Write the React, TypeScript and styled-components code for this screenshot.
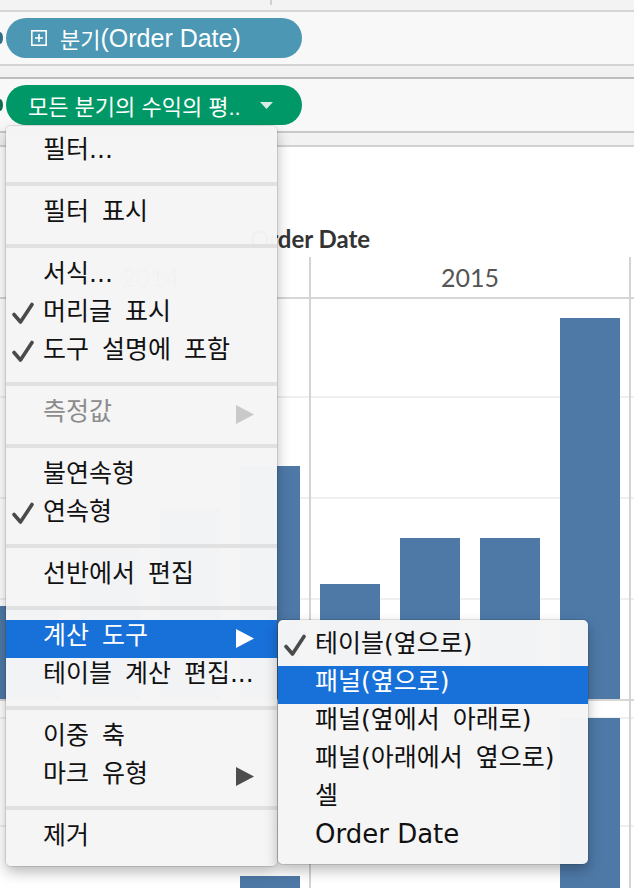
import styled, { createGlobalStyle } from "styled-components";

const GlobalStyle = createGlobalStyle`
  * { box-sizing: border-box; }
  html, body { margin: 0; padding: 0; background: #fff; }
  body { overflow: hidden; }
`;

// 화면 전체
const Page = styled.div`
  position: relative;
  width: 634px;
  height: 888px;
  overflow: hidden;
  display: flex;
  flex-direction: column;
  background: #fff;
  font-family: "Liberation Sans", "Noto Sans CJK KR", sans-serif;
`;

const TopStrip = styled.div`
  flex: none;
  height: 12px;
  background: #f3f3f3;
  border-bottom: 2px solid #d6d6d6;
  display: flex;
`;

const Tick = styled.span`
  margin-left: 270px;
  width: 2px;
  height: 5px;
  background: #d0d0d0;
`;

const Shelf = styled.div<{ $line: string }>`
  flex: none;
  height: 54px;
  background: #f8f8f8;
  border-bottom: 2px solid ${(p) => p.$line};
  display: flex;
  align-items: center;
  gap: 3px;
`;

const Spacer = styled.div<{ $h: number; $bg: string; $line: string }>`
  flex: none;
  height: ${(p) => p.$h}px;
  background: ${(p) => p.$bg};
  border-bottom: 2px solid ${(p) => p.$line};
`;

// 선반 왼쪽에 잘린 알약 끝
const Stub = styled.span<{ $color: string }>`
  flex: none;
  width: 6px;
  height: 12px;
  margin-left: -3px;
  border-radius: 50%;
  background: ${(p) => p.$color};
`;

const Pill = styled.div<{ $color: string; $pad: number }>`
  width: 296px;
  height: 40px;
  border-radius: 20px;
  background: ${(p) => p.$color};
  color: #fff;
  display: flex;
  align-items: center;
  padding-left: ${(p) => p.$pad}px;
  font-size: 22px;
  white-space: nowrap;
`;

const PillIcon = styled.svg`
  flex: none;
  margin-right: 13px;
`;

const Lat = styled.span<{ $size: number }>`
  font-size: ${(p) => p.$size}px;
  word-spacing: 0;
`;

const Caret = styled.svg`
  margin-left: auto;
  margin-right: 29px;
  flex: none;
`;

// 차트 영역
const Chart = styled.div`
  flex: 1;
  min-height: 0;
  display: flex;
  flex-direction: column;
  background: #fff;
`;

const ChartTitle = styled.div`
  margin: 76px 0 2px 250px;
  height: 32px;
  line-height: 32px;
  font-family: Lato, "Liberation Sans", sans-serif;
  font-weight: 700;
  font-size: 24px;
  color: #333;
`;

const Columns = styled.div`
  flex: 1;
  min-height: 0;
  display: grid;
  grid-template-columns: 320px 320px 40px;
  margin-left: -9px;
`;

const Column = styled.div`
  display: flex;
  flex-direction: column;
  border-right: 2px solid #d3d3d3;
  min-height: 0;
`;

const YearHeader = styled.div`
  flex: none;
  height: 42px;
  border-bottom: 2px solid #d6d6d6;
  display: flex;
  align-items: center;
  justify-content: center;
  font-family: Lato, "Liberation Sans", sans-serif;
  font-size: 25px;
  color: #555;
`;

const Pane = styled.div<{ $top?: boolean }>`
  display: flex;
  align-items: flex-end;
  gap: 20px;
  padding-left: 9px;
  overflow: hidden;
  ${(p) =>
    p.$top
      ? `
    flex: none;
    height: 402px;
    border-bottom: 2px solid #d6d6d6;
    background: repeating-linear-gradient(to top, transparent 0, transparent 99px, #efefef 99px, #efefef 101px);
  `
      : `
    flex: 1;
    min-height: 0;
    background:
      linear-gradient(#efefef, #efefef) 0 16px / 100% 2px no-repeat,
      linear-gradient(#efefef, #efefef) 0 124px / 100% 2px no-repeat;
  `}
`;

const Bar = styled.div<{ $h: number }>`
  flex: none;
  width: 60px;
  height: ${(p) => p.$h}px;
  background: #4e79a7;
`;

// 메뉴
const Menu = styled.div<{ $top: number; $left: number; $width: number }>`
  position: absolute;
  top: ${(p) => p.$top}px;
  left: ${(p) => p.$left}px;
  width: ${(p) => p.$width}px;
  padding: 8px 0;
  background: rgba(245, 245, 246, 0.985);
  border-radius: 5px;
  box-shadow: 0 0 0 1px rgba(0, 0, 0, 0.1), 0 6px 14px rgba(0, 0, 0, 0.28);
  font-family: "DejaVu Sans", "Noto Sans CJK KR", sans-serif;
  font-size: 25px;
  word-spacing: 5px;
  color: #111;
`;

const Item = styled.div<{ $active?: boolean; $disabled?: boolean }>`
  height: 38px;
  display: grid;
  grid-template-columns: 31px 1fr 18px;
  align-items: center;
  padding: 0 23px 0 6px;
  white-space: nowrap;
  background: ${(p) => (p.$active ? "#1870d9" : "transparent")};
  color: ${(p) => (p.$active ? "#fff" : p.$disabled ? "#8c8c8c" : "#111")};
`;

const Label = styled.span`
  display: block;
  margin-bottom: 6px;
  line-height: 30px;
`;

const Separator = styled.div`
  height: 4px;
  margin: 10px 0;
  background: #e1e1e1;
`;

const Check = () => (
  <svg width="22" height="22" viewBox="0 0 22 22">
    <path
      d="M2 12.5 L8.5 20 L20 2.5"
      fill="none"
      stroke="#4a4a4a"
      strokeWidth="3.6"
      strokeLinecap="round"
      strokeLinejoin="round"
    />
  </svg>
);

const Arrow = ({ color }: { color: string }) => (
  <svg width="18" height="19" viewBox="0 0 18 19">
    <polygon points="0,0 18,9.5 0,19" fill={color} />
  </svg>
);

interface IMenuItem {
  label: string;
  checked?: boolean;
  arrow?: boolean;
  active?: boolean;
  disabled?: boolean;
  latin?: boolean;
}

const mainMenu: IMenuItem[][] = [
  [{ label: "필터..." }],
  [{ label: "필터 표시" }],
  [
    { label: "서식..." },
    { label: "머리글 표시", checked: true },
    { label: "도구 설명에 포함", checked: true },
  ],
  [{ label: "측정값", arrow: true, disabled: true }],
  [{ label: "불연속형" }, { label: "연속형", checked: true }],
  [{ label: "선반에서 편집" }],
  [
    { label: "계산 도구", arrow: true, active: true },
    { label: "테이블 계산 편집..." },
  ],
  [{ label: "이중 축" }, { label: "마크 유형", arrow: true }],
  [{ label: "제거" }],
];

const subMenu: IMenuItem[] = [
  { label: "테이블(옆으로)", checked: true },
  { label: "패널(옆으로)", active: true },
  { label: "패널(옆에서 아래로)" },
  { label: "패널(아래에서 옆으로)" },
  { label: "셀" },
  { label: "Order Date", latin: true },
];

function MenuRow({ item }: { item: IMenuItem }) {
  const arrowColor = item.active ? "#fff" : item.disabled ? "#c9c9c9" : "#4d4d4d";
  return (
    <Item $active={item.active} $disabled={item.disabled}>
      <span>{item.checked && <Check />}</span>
      <Label>{item.latin ? <Lat $size={26}>{item.label}</Lat> : item.label}</Label>
      <span>{item.arrow && <Arrow color={arrowColor} />}</span>
    </Item>
  );
}

const columns = [
  { year: "2014", top: [93, 150, 190, 233], bottom: [0, 0, 0, 12] },
  { year: "2015", top: [115, 161, 161, 381], bottom: [0, 0, 0, 170] },
];

function App() {
  return (
    <Page>
      <GlobalStyle />
      <TopStrip>
        <Tick />
      </TopStrip>
      <Shelf $line="#d3d3d3">
        <Stub $color="#2f6f88" />
        <Pill $color="#4b97b4" $pad={25}>
          <PillIcon width="16" height="16" viewBox="0 0 16 16">
            <rect x="0.8" y="0.8" width="14.4" height="14.4" fill="none" stroke="#fff" strokeWidth="1.6" />
            <path d="M8 4 V12 M4 8 H12" stroke="#fff" strokeWidth="1.6" />
          </PillIcon>
          분기<Lat $size={25}>(Order Date)</Lat>
        </Pill>
      </Shelf>
      <Spacer $h={13} $bg="#f1f1f1" $line="#bdbdbd" />
      <Shelf $line="#c8c8c8">
        <Stub $color="#0b6e4a" />
        <Pill $color="#009866" $pad={22}>
          모든 분기의 수익의 평..
          <Caret width="13" height="7" viewBox="0 0 13 7">
            <polygon points="0,0 13,0 6.5,7" fill="#d6ece2" />
          </Caret>
        </Pill>
      </Shelf>
      <Spacer $h={14} $bg="#f2f2f2" $line="#d2d2d2" />
      <Chart>
        <ChartTitle>Order Date</ChartTitle>
        <Columns>
          {columns.map((col) => (
            <Column key={col.year}>
              <YearHeader>{col.year}</YearHeader>
              <Pane $top>
                {col.top.map((h, i) => (
                  <Bar key={i} $h={h} />
                ))}
              </Pane>
              <Pane>
                {col.bottom.map((h, i) => (
                  <Bar key={i} $h={h} />
                ))}
              </Pane>
            </Column>
          ))}
          <Column>
            <YearHeader />
            <Pane $top />
            <Pane />
          </Column>
        </Columns>
      </Chart>

      <Menu $top={126} $left={6} $width={271}>
        {mainMenu.map((group, gi) => (
          <div key={gi}>
            {gi > 0 && <Separator />}
            {group.map((item) => (
              <MenuRow key={item.label} item={item} />
            ))}
          </div>
        ))}
      </Menu>

      <Menu $top={620} $left={278} $width={310}>
        {subMenu.map((item) => (
          <MenuRow key={item.label} item={item} />
        ))}
      </Menu>
    </Page>
  );
}

export default App;
